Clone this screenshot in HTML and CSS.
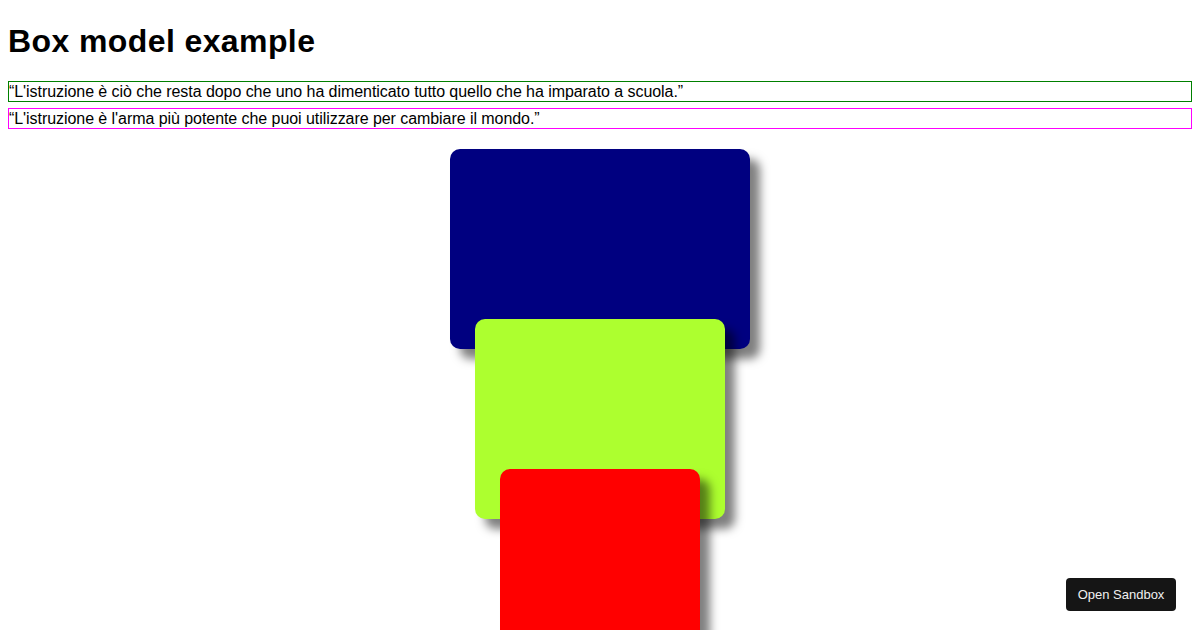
FILE: index.html
```html
<!DOCTYPE html>
<html>
<head>
<meta charset="utf-8">
<link rel="stylesheet" href="styles.css">
</head>
<body>
<h1 class="title">Box model example</h1>
<p class="quote quote-green">“L'istruzione è ciò che resta dopo che uno ha dimenticato tutto quello che ha imparato a scuola.”</p>
<p class="quote quote-pink">“L'istruzione è l'arma più potente che puoi utilizzare per cambiare il mondo.”</p>
<div class="box box-navy"></div>
<div class="box box-green"></div>
<div class="box box-red"></div>
<a class="sandbox-btn">Open Sandbox</a>
</body>
</html>
```
FILE: styles.css
```css
html, body {
  font-family: "Liberation Sans", Arial, sans-serif;
  background: #fff;
  color: #000;
}
body {
  margin: 8px;
}
.title {
  font-size: 32px;
  font-weight: bold;
  margin: 15px 0 21px;
  line-height: 37px;
  letter-spacing: 0.4px;
}
.quote {
  font-size: 16px;
  margin: 6px 0;
  line-height: 19px;
  letter-spacing: -0.06px;
}
.quote-green {
  border: 1px solid #008000;
}
.quote-pink {
  border: 1px solid #ff00ff;
}
.box {
  height: 200px;
  margin-left: auto;
  margin-right: auto;
  border-radius: 10px;
  box-shadow: 10px 10px 10px rgba(0, 0, 0, 0.5);
  position: relative;
}
.box-navy {
  width: 300px;
  margin-top: 20px;
  background: #000080;
}
.box-green {
  width: 250px;
  margin-top: -30px;
  background: #adff2f;
}
.box-red {
  width: 200px;
  margin-top: -50px;
  background: #ff0000;
}
.sandbox-btn {
  position: fixed;
  right: 24px;
  bottom: 19px;
  width: 110px;
  height: 33px;
  box-sizing: border-box;
  display: flex;
  align-items: center;
  justify-content: center;
  background: #151515;
  color: #f0f0f0;
  border-radius: 4px;
  font-family: "Liberation Sans", Arial, sans-serif;
  font-size: 13px;
}
```
